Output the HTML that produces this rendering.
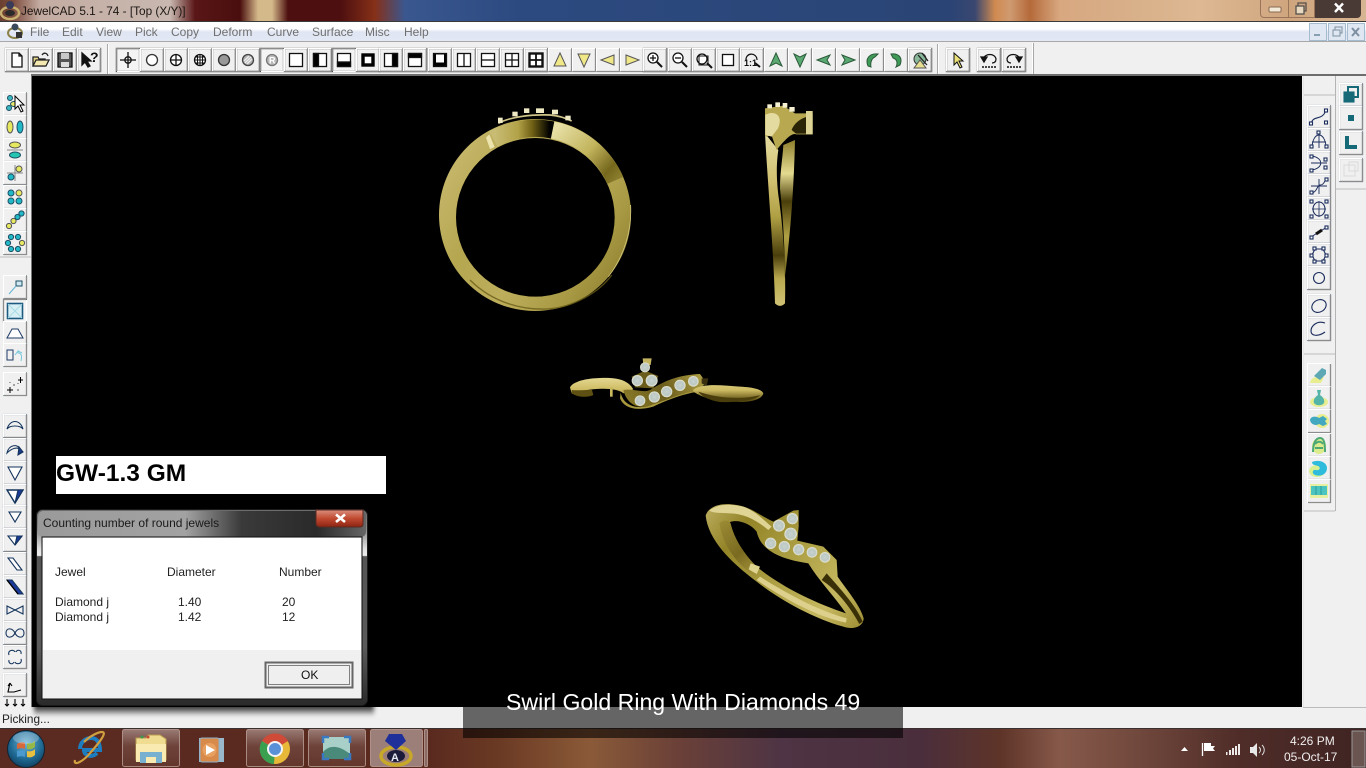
<!DOCTYPE html>
<html>
<head>
<meta charset="utf-8">
<title>JewelCAD</title>
<style>
html,body{margin:0;padding:0;width:1366px;height:768px;overflow:hidden;background:#f0f0f0;font-family:"Liberation Sans",sans-serif}
div,span{position:absolute}
.t{white-space:nowrap;font-size:12px;line-height:14px}
.m{top:25px;color:#6f6f6f;font-size:12px;line-height:14px;white-space:nowrap}
.d{color:#222;font-size:12px;line-height:14px;white-space:nowrap}
svg{position:absolute;left:0;top:0;filter:blur(.35px)}
</style>
</head>
<body>
<!-- title bar -->
<div style="left:0;top:0;width:1366px;height:21px;background:linear-gradient(90deg,#6a4030 0,#7c4a3a 12px,#c4aca2 40px,#c8b8b0 170px,#5a1616 195px,#4a0e0e 240px,#d4b98a 258px,#d4b98a 272px,#4d0f0f 288px,#4d0f0f 340px,#863018 375px,#3a5790 405px,#2c4a80 520px,#2a4475 950px,#3a4770 975px,#d08a50 995px,#cf9a70 1010px,#b56a3a 1030px,#d8a880 1060px,#d7ae88 1120px,#ddb892 1200px,#cfa57e 1290px,#d6b592 1366px)"></div>
<div style="left:1315px;top:0;width:46px;height:18px;background:#4a3a36;border-radius:0 0 4px 0"></div>
<div style="left:1260px;top:0;width:55px;height:18px;box-sizing:border-box;border:1px solid #9a7458;border-top:0;border-radius:0 0 0 4px"></div>
<div style="left:1288px;top:0;width:1px;height:18px;background:#9a7458"></div>
<div class="t" style="left:21px;top:4px;color:#1c1612;font-size:11.8px">JewelCAD 5.1 - 74 - [Top (X/Y)]</div>
<!-- menu -->
<div style="left:0;top:21px;width:1366px;height:21px;box-sizing:border-box;border-top:1px solid #3a3a3a;border-bottom:1px solid #a8a8a8;background:linear-gradient(#fff 0,#fdfeff 7px,#dfe5f2 10px,#e2e8f4 19px)"></div>
<span class="m" style="left:30px">File</span>
<span class="m" style="left:62px">Edit</span>
<span class="m" style="left:96px">View</span>
<span class="m" style="left:135px">Pick</span>
<span class="m" style="left:171px">Copy</span>
<span class="m" style="left:213px">Deform</span>
<span class="m" style="left:267px">Curve</span>
<span class="m" style="left:312px">Surface</span>
<span class="m" style="left:365px">Misc</span>
<span class="m" style="left:404px">Help</span>
<!-- canvas -->
<div style="left:31px;top:74px;width:1335px;height:2px;background:#6d6d6d"></div>
<div style="left:32px;top:76px;width:1270px;height:631px;background:#000"></div>
<!-- status / taskbar -->
<div style="left:0;top:707px;width:1366px;height:21px;background:#f0f0f0;overflow:hidden">
<div style="left:34px;top:-6px;width:340px;height:15px;background:linear-gradient(#333 40%,rgba(70,70,70,0));filter:blur(2px)"></div>
</div>
<div class="t" style="left:2px;top:712px;color:#222;font-size:11.8px">Picking...</div>
<div style="left:0;top:728px;width:1366px;height:40px;border-top:1px solid #3a3030;background:linear-gradient(90deg,#5b2a20 0,#5a2a1f 430px,#6b3a24 500px,#8a5a38 590px,#6a4038 680px,#4e3444 780px,#4a2e3c 920px,#5e3428 1000px,#86594a 1060px,#734a3e 1130px,#4f2c28 1240px,#3f2422 1366px);box-sizing:border-box;height:40px"></div>
<!-- svg layer -->
<svg width="1366" height="768" viewBox="0 0 1366 768">
<defs>
<g id="b"><rect x="-11.5" y="-11.5" width="23" height="23" fill="#f0f0f0"/><path d="M-11.5 11.5V-11.5H11.5" fill="none" stroke="#fff"/><path d="M-11 11.5H11.5V-11" fill="none" stroke="#8c8c8c" stroke-width="1.3"/></g>
<g id="p"><rect x="-11.5" y="-11.5" width="23" height="23" fill="#f4f4f4"/><path d="M-11.5 11.5V-11.5H11.5" fill="none" stroke="#8c8c8c" stroke-width="1.3"/><path d="M-11 11.5H11.5V-11" fill="none" stroke="#fff"/></g>
<linearGradient id="g1" gradientUnits="userSpaceOnUse" x1="30" y1="200" x2="600" y2="560">
<stop offset="0" stop-color="#c8b96e"/><stop offset=".3" stop-color="#b5a650"/><stop offset=".55" stop-color="#bdae5c"/><stop offset=".8" stop-color="#a89a44"/><stop offset="1" stop-color="#8a7c2c"/></linearGradient>
<linearGradient id="g2" gradientUnits="userSpaceOnUse" x1="380" y1="100" x2="556" y2="256">
<stop offset="0" stop-color="#e6deA4"/><stop offset=".5" stop-color="#c2b45c"/><stop offset=".85" stop-color="#75671c"/><stop offset="1" stop-color="#8a7c2c"/></linearGradient>
<linearGradient id="g3" gradientUnits="userSpaceOnUse" x1="195" y1="0" x2="368" y2="0">
<stop offset="0" stop-color="#c8bc74"/><stop offset=".4" stop-color="#b2a248"/><stop offset=".65" stop-color="#6e5f14"/><stop offset=".95" stop-color="#000"/></linearGradient>
<linearGradient id="v1" gradientUnits="userSpaceOnUse" x1="0" y1="100" x2="0" y2="630">
<stop offset="0" stop-color="#e8e0a8"/><stop offset=".3" stop-color="#d0c070"/><stop offset=".5" stop-color="#b0a044"/><stop offset=".72" stop-color="#4a3e0c"/><stop offset=".85" stop-color="#b8a84e"/><stop offset="1" stop-color="#d0c274"/></linearGradient>
<linearGradient id="v2" gradientUnits="userSpaceOnUse" x1="0" y1="130" x2="0" y2="550">
<stop offset="0" stop-color="#8a7a28"/><stop offset=".25" stop-color="#e4da90"/><stop offset=".45" stop-color="#4a3e0a"/><stop offset=".7" stop-color="#b0a044"/><stop offset="1" stop-color="#6a5c18"/></linearGradient>
<linearGradient id="h1" gradientUnits="userSpaceOnUse" x1="0" y1="80" x2="0" y2="170">
<stop offset="0" stop-color="#e6da96"/><stop offset=".45" stop-color="#cdbb62"/><stop offset=".8" stop-color="#5a4c10"/><stop offset="1" stop-color="#8a7a2a"/></linearGradient>
<linearGradient id="h2" gradientUnits="userSpaceOnUse" x1="200" y1="170" x2="420" y2="70">
<stop offset="0" stop-color="#8a7a2a"/><stop offset=".5" stop-color="#6a5c1a"/><stop offset="1" stop-color="#ac9c44"/></linearGradient>
<linearGradient id="r4" gradientUnits="userSpaceOnUse" x1="440" y1="480" x2="900" y2="830">
<stop offset="0" stop-color="#b8aa5a"/><stop offset=".2" stop-color="#938428"/><stop offset=".45" stop-color="#a89a3e"/><stop offset=".8" stop-color="#c6b860"/><stop offset="1" stop-color="#a09038"/></linearGradient>
<linearGradient id="r4i" gradientUnits="userSpaceOnUse" x1="480" y1="520" x2="590" y2="660">
<stop offset="0" stop-color="#9a8a34"/><stop offset=".6" stop-color="#7a6a20"/><stop offset="1" stop-color="#a09038"/></linearGradient>
<radialGradient id="dm"><stop offset="0" stop-color="#c8d2ce"/><stop offset=".65" stop-color="#bcc8c4"/><stop offset="1" stop-color="#e6e6d4"/></radialGradient>
<linearGradient id="frame" x1="0" y1="0" x2="0" y2="1"><stop offset="0" stop-color="#6a6a6a"/><stop offset=".1" stop-color="#888"/><stop offset=".2" stop-color="#e0e0e0"/><stop offset=".235" stop-color="#eee"/><stop offset=".24" stop-color="#555"/><stop offset=".7" stop-color="#5a5a5a"/><stop offset="1" stop-color="#2a2a2a"/></linearGradient>
<linearGradient id="ttl" x1="0" y1="0" x2="1" y2="0"><stop offset="0" stop-color="#9a9a9a"/><stop offset=".45" stop-color="#a2a2a2"/><stop offset=".62" stop-color="#3a3a3a"/><stop offset=".85" stop-color="#2a2a2a"/><stop offset="1" stop-color="#666"/></linearGradient>
<linearGradient id="red" x1="0" y1="0" x2="0" y2="1"><stop offset="0" stop-color="#d98f7e"/><stop offset=".5" stop-color="#c04a30"/><stop offset="1" stop-color="#8c2412"/></linearGradient>
<radialGradient id="orb" cx=".5" cy=".35" r=".7"><stop offset="0" stop-color="#6fb4d8"/><stop offset=".6" stop-color="#1f6a94"/><stop offset="1" stop-color="#0f3a58"/></radialGradient>
<linearGradient id="tb" x1="0" y1="0" x2="0" y2="1"><stop offset="0" stop-color="#fff" stop-opacity=".38"/><stop offset=".45" stop-color="#fff" stop-opacity=".12"/><stop offset="1" stop-color="#fff" stop-opacity=".06"/></linearGradient>
</defs>

<!-- toolbar separators -->
<g stroke-width="1">
<path d="M108.5 44V74M938.5 44V74M1032.5 43V74" stroke="#fff"/>
<path d="M107.5 44V74M937.5 44V74M1033.5 43V74" stroke="#a8a8a8"/>
<path d="M31.5 76V707" stroke="#777"/>
<path d="M1303 95H1335M1303 354H1335M1303 511H1335M1336 189H1366M0 257H31" stroke="#bbb"/>
<path d="M1335.5 76V511" stroke="#b4b4b4"/>
<path d="M1303.5 76V707" stroke="#e6e6e6"/>
<path d="M1303 707.5H1366" stroke="#bbb"/>
</g>

<!-- top toolbar -->
<g fill="none" stroke="#111" stroke-width="1.3">
<g transform="translate(17 60)"><use href="#b"/><path d="M-5-7H2L5-4V7H-5ZM2-7V-4H5" fill="#fff"/></g>
<g transform="translate(41 60)"><use href="#b"/><path d="M-8 6V-3H-3L-2-1H4V6Z" fill="#e8d88a" stroke="#222"/><path d="M-8 6L-5 0H8L5 6Z" fill="#f2e8b0" stroke="#222"/><path d="M1-5C3-8 6-7 7-4" stroke="#222"/></g>
<g transform="translate(65 60)"><use href="#b"/><rect x="-7" y="-7" width="14" height="14" fill="#555"/><rect x="-4" y="-7" width="8" height="6" fill="#c8c8c8" stroke="none"/><rect x="-4" y="2" width="8" height="5" fill="#ddd" stroke="none"/></g>
<g transform="translate(89 60)"><use href="#b"/><path d="M-7-7L-7 5-4 2-1 7 1 6-2 1 2 1Z" fill="#111"/><text x="1" y="2" font-family="Liberation Sans,sans-serif" font-weight="700" font-size="14" fill="#111" stroke="none">?</text></g>

<g transform="translate(128 60)"><use href="#p"/><circle r="3.2" fill="#fff"/><path d="M0-8V8M-8 0H8"/></g>
<g transform="translate(152 60)"><use href="#b"/><circle r="5.5" fill="#fff" stroke="#333"/></g>
<g transform="translate(176 60)"><use href="#b"/><circle r="5.5" fill="#fff"/><path d="M0-6V6M-6 0H6"/></g>
<g transform="translate(200 60)"><use href="#b"/><circle r="5.5" fill="#fff"/><path d="M0-6V6M-6 0H6M-5-3H5M-5 3H5M-2.5-5V5M2.5-5V5" stroke-width="1"/></g>
<g transform="translate(224 60)"><use href="#b"/><circle r="5.5" fill="#999" stroke="#333"/></g>
<g transform="translate(248 60)"><use href="#b"/><circle r="5.5" fill="#b0b0b0" stroke="#444"/><path d="M-3 3L3-3M-1 4L4-1M-4 1L1-4" stroke="#eee" stroke-width="1.4"/></g>
<g transform="translate(272 60)"><use href="#p"/><circle r="5.5" fill="#bbb" stroke="#777"/><text x="-3" y="3.5" font-family="Liberation Sans,sans-serif" font-weight="700" font-size="9" fill="#fff" stroke="none">R</text></g>

<g transform="translate(296 60)"><use href="#b"/><rect x="-6.5" y="-6.5" width="13" height="13" fill="#fff"/></g>
<g transform="translate(320 60)"><use href="#b"/><rect x="-6.5" y="-6.5" width="13" height="13" fill="#fff"/><rect x="-6.5" y="-6.5" width="5" height="13" fill="#000"/></g>
<g transform="translate(344 60)"><use href="#p"/><rect x="-6.5" y="-6.5" width="13" height="13" fill="#fff"/><rect x="-6.5" y="2" width="13" height="4.5" fill="#000"/></g>
<g transform="translate(368 60)"><use href="#b"/><rect x="-5" y="-5" width="10" height="10" fill="#fff" stroke="#000" stroke-width="3.4"/></g>
<g transform="translate(391 60)"><use href="#b"/><rect x="-6.5" y="-6.5" width="13" height="13" fill="#fff"/><rect x="1.5" y="-6.5" width="5" height="13" fill="#000"/></g>
<g transform="translate(415 60)"><use href="#b"/><rect x="-6.5" y="-6.5" width="13" height="13" fill="#fff"/><rect x="-6.5" y="-6.5" width="13" height="4" fill="#000"/></g>
<g transform="translate(440 60)"><use href="#b"/><rect x="-6.5" y="-6.5" width="13" height="13" fill="#000"/><rect x="-4" y="-5.5" width="8" height="8" fill="#fff" stroke="none"/></g>
<g transform="translate(464 60)"><use href="#b"/><rect x="-6.5" y="-6.5" width="13" height="13" fill="#fff"/><path d="M0-6.5V6.5"/></g>
<g transform="translate(488 60)"><use href="#b"/><rect x="-6.5" y="-6.5" width="13" height="13" fill="#fff"/><path d="M-6.5 0H6.5"/></g>
<g transform="translate(512 60)"><use href="#b"/><rect x="-6.5" y="-6.5" width="13" height="13" fill="#fff"/><path d="M-6.5 0H6.5M0-6.5V6.5"/></g>
<g transform="translate(536 60)"><use href="#b"/><rect x="-6.5" y="-6.5" width="13" height="13" fill="#fff" stroke-width="2.4"/><path d="M-6.5 0H6.5M0-6.5V6.5" stroke-width="1.8"/></g>

<g stroke="#555" stroke-width="1" fill="#efe788">
<g transform="translate(560 60)"><use href="#b"/><path d="M0-7L6 6H-6Z"/></g>
<g transform="translate(584 60)"><use href="#b"/><path d="M0 7L6-6H-6Z"/></g>
<g transform="translate(608 60)"><use href="#b"/><path d="M-7 0L6-5V5Z"/></g>
<g transform="translate(632 60)"><use href="#b"/><path d="M7 0L-6-5V5Z"/></g>
</g>
<g transform="translate(655 60)"><use href="#b"/><circle cx="-2" cy="-2" r="5" fill="#fff"/><path d="M-5-2H1M-2-5V1M2 2L7 7"/><path d="M2 2L7 7" stroke-width="2"/></g>
<g transform="translate(680 60)"><use href="#b"/><circle cx="-2" cy="-2" r="5" fill="#fff"/><path d="M-5-2H1"/><path d="M2 2L7 7" stroke-width="2"/></g>
<g transform="translate(704 60)"><use href="#b"/><circle cx="-2" cy="-1" r="5" fill="#fff"/><rect x="-5" y="-4" width="9" height="9" stroke-width="1"/><path d="M3 3L8 8" stroke-width="2"/></g>
<g transform="translate(728 60)"><use href="#b"/><rect x="-5.5" y="-5.5" width="11" height="11" fill="#fff"/></g>
<g transform="translate(752 60)"><use href="#b"/><path d="M-6 1C-7-8 5-8 5 0" stroke-width="1.2"/><text x="-8" y="6" font-family="Liberation Sans,sans-serif" font-weight="700" font-size="9" fill="#111" stroke="none">1:1</text><path d="M3 3L8 7" stroke-width="2"/></g>
<g stroke="#2b5a3a" stroke-width="1" fill="#5aa872">
<g transform="translate(776 60)"><use href="#b"/><path d="M0-7L6 6 0 3-6 6Z"/></g>
<g transform="translate(800 60)"><use href="#b"/><path d="M0 7L6-6 0-3-6-6Z"/></g>
<g transform="translate(824 60)"><use href="#b"/><path d="M-7 0L6-5 3 0 6 5Z"/></g>
<g transform="translate(848 60)"><use href="#b"/><path d="M7 0L-6-5-3 0-6 5Z"/></g>
<g transform="translate(872 60)"><use href="#b"/><path d="M6-6C-3-7-7-1-4 6L-1 7C-2 2 0-2 3-3Z" fill="#3f9a58"/></g>
<g transform="translate(896 60)"><use href="#b"/><path d="M-5-6C3-7 7-2 4 5L0 7C2 3 1-1-3-2Z" fill="#3f9a58"/></g>
</g>
<g transform="translate(920 60)"><use href="#b"/><circle cy="-1" r="6" fill="#8ab89a" stroke="#333" stroke-width="1"/><path d="M-6 8L0 0 6 8Z" fill="#e8e090" stroke="#555" stroke-width="1"/><path d="M-2-5L7 5M2-7L8 1" stroke="#222" stroke-width="1.3"/></g>
<g transform="translate(958 60)"><use href="#b"/><path d="M-4-7V5L-1 2 2 8 4 7 1 1H5Z" fill="#ece27a" stroke-width="1"/></g>
<g transform="translate(989 60)"><use href="#b"/><path d="M-6-1C-4-7 6-7 7-1C7 2 5 3 3 3" stroke-width="1.2"/><path d="M-8-3L-5 2-2-3Z" fill="#111"/><path d="M-7 7H7" stroke-width="1.4" stroke-dasharray="2 1"/></g>
<g transform="translate(1014 60)"><use href="#b"/><path d="M6-1C4-7-6-7-7-1C-7 2-5 3-3 3" stroke-width="1.2"/><path d="M8-3L5 2 2-3Z" fill="#111"/><path d="M-7 7H7" stroke-width="1.4" stroke-dasharray="2 1"/></g>
</g>

<!-- MDI buttons -->
<g fill="#dfe7f2" stroke="#a5bccf">
<rect x="1309.5" y="23.5" width="17" height="17"/><rect x="1328.5" y="23.5" width="17" height="17"/><rect x="1347.5" y="23.5" width="17" height="17"/>
<path d="M1314 35H1320" stroke="#88a0b4" stroke-width="2"/>
<path d="M1333 30H1340V36H1333ZM1335 30V27H1342V33H1340" fill="none" stroke="#7d8fa0"/>
<path d="M1352 28L1359 36M1359 28L1352 36" stroke="#7d8fa0" stroke-width="2"/>
</g>
<!-- window buttons -->
<rect x="1269" y="7" width="12" height="5" rx="1" fill="#f3ead8" stroke="#8a6a50"/>
<g fill="none" stroke="#56504c" stroke-width="1.3"><rect x="1296" y="6" width="8" height="8" fill="#e8d8c0"/><path d="M1298 6V3H1306V11H1304"/></g>
<path d="M1335 3.5L1343 12M1343 3.5L1335 12" stroke="#fff" stroke-width="2.4"/>
<!-- app icons -->
<g transform="translate(10 11)"><ellipse cy="2" rx="9" ry="6" fill="none" stroke="#c8b070" stroke-width="2.4"/><ellipse cy="2" rx="5" ry="3" fill="#2a2a2a"/><circle cy="-6" r="4" fill="#3a3a5a"/></g>
<g transform="translate(15 31)"><ellipse cy="2" rx="7" ry="5" fill="none" stroke="#8a8048" stroke-width="2"/><circle cy="-4" r="3.5" fill="#3a4a5a"/><rect x="1" y="1" width="6" height="6" fill="#333"/></g>

<!-- left toolbar -->
<g fill="none" stroke="#1c4f66" stroke-width="1">
<g transform="translate(15 104)"><use href="#b"/><circle cx="-5" cy="-6" r="2.5" fill="#3bb7c0"/><ellipse cx="-1" cy="0" rx="3.5" ry="2.5" fill="#e8e86a"/><circle cx="-6" cy="4" r="2.5" fill="#3bb7c0"/><path d="M0-8V5L3 2 6 8 8 7 5 1H9Z" fill="#fff" stroke="#000"/></g>
<g transform="translate(15 127)"><use href="#b"/><ellipse cx="-5" rx="3" ry="6" fill="#e6e860" stroke="#555"/><ellipse cx="5" rx="3" ry="6" fill="#22b9c6"/></g>
<g transform="translate(15 150)"><use href="#b"/><ellipse cy="-5" rx="5.5" ry="3" fill="#e6e860" stroke="#555"/><path d="M-8 0H8" stroke="#888"/><ellipse cy="5" rx="5.5" ry="3" fill="#22c6b0"/></g>
<g transform="translate(15 173)"><use href="#b"/><circle cx="4" cy="-4" r="3" fill="#e6e860" stroke="#555"/><circle cx="-4" cy="4" r="3" fill="#22b9c6"/><path d="M-8 0H8M0-8V8" stroke="#888"/></g>
<g transform="translate(15 197)"><use href="#b"/><circle cx="-4" cy="-4" r="3" fill="#22b9c6"/><circle cx="4" cy="-4" r="3" fill="#e6e860" stroke="#555"/><circle cx="-4" cy="4" r="3" fill="#22b9c6"/><circle cx="4" cy="4" r="3" fill="#22b9c6"/></g>
<g transform="translate(15 220)"><use href="#b"/><circle cx="-6" cy="6" r="2.6" fill="#e6e860" stroke="#555"/><circle cx="-1.5" cy="1" r="2.6" fill="#e6e860" stroke="#555"/><circle cx="2.5" cy="-3" r="2.6" fill="#22b9c6"/><circle cx="6.5" cy="-6.5" r="2.6" fill="#22b9c6"/></g>
<g transform="translate(15 243)"><use href="#b"/><circle cx="-4" cy="-6" r="2.6" fill="#22b9c6"/><circle cx="3" cy="-6" r="2.6" fill="#22b9c6"/><circle cx="7" cy="0" r="2.6" fill="#e6e860" stroke="#555"/><circle cx="3" cy="6" r="2.6" fill="#22b9c6"/><circle cx="-4" cy="6" r="2.6" fill="#22b9c6"/><circle cx="-7" cy="0" r="2.6" fill="#22b9c6"/></g>

<g transform="translate(15 287)"><use href="#b"/><rect x="1" y="-6" width="6" height="5" fill="#cfe8f2"/><path d="M-6 7L1-1" stroke="#63b4d6"/></g>
<g transform="translate(15 311)"><use href="#p"/><rect x="-7.5" y="-7.5" width="15" height="15" fill="#d8f0f4" stroke="#1c5a80" stroke-width="1.6"/><path d="M-7-7L7 7M7-7L-7 7" stroke="#a8dce8"/></g>
<g transform="translate(15 333)"><use href="#b"/><path d="M-8 5H8L3-4H-3Z" stroke="#1c3a66" fill="#fff"/></g>
<g transform="translate(15 355)"><use href="#b"/><rect x="-8" y="-5" width="6" height="10" stroke="#1c3a66"/><path d="M0 0L3-4V-2C7-2 7 2 6 6M3-4L7-2" stroke="#7cc8dc"/></g>
<g transform="translate(15 384)"><use href="#b"/><path d="M-8 6H-2M-5 3V9M3-4H8M5.5-7V-1" stroke="#000"/><path d="M-2 1H0M3-1V0M-5-2V-1M2 6H4" stroke="#555"/></g>

<g stroke="#14345c" stroke-width="1.1">
<g transform="translate(15 426)"><use href="#b"/><path d="M-8 3C-5-7 5-7 8 3C5-1-5-1-8 3Z"/></g>
<g transform="translate(15 450)"><use href="#b"/><path d="M-8 3C-6-6 3-6 5-1C2-3-3-2-8 3Z"/><path d="M4-3L8 2 3 5Z" fill="#1c3a8a"/></g>
<g transform="translate(15 473)"><use href="#b"/><path d="M-7-6H7L0 7Z" fill="#fff"/></g>
<g transform="translate(15 496)"><use href="#b"/><path d="M-8-6H8L0 7Z" fill="#fff" stroke-width="1.4"/><path d="M3-6H8L0 7Z" fill="#1c3a9a"/></g>
<g transform="translate(15 517)"><use href="#b"/><path d="M-6-5H6L0 5Z" fill="#fff"/></g>
<g transform="translate(15 540)"><use href="#b"/><path d="M-7-4H7L0 5Z" fill="#fff"/><path d="M2-4H7L0 5Z" fill="#1c3a9a"/></g>
<g transform="translate(15 564)"><use href="#b"/><path d="M-7-6H-2L7 6H2Z" fill="#fff"/></g>
<g transform="translate(15 587)"><use href="#b"/><path d="M-8-7H-3L8 7H3Z" fill="#1c3a9a"/><path d="M-8-7L3 7" stroke="#000" stroke-width="1.4"/></g>
<g transform="translate(15 610)"><use href="#b"/><path d="M-8-4L8 4V-4L-8 4Z"/></g>
<g transform="translate(15 633)"><use href="#b"/><path d="M0 0C-3-6-9-5-9 0C-9 5-3 6 0 0C3-6 9-5 9 0C9 5 3 6 0 0Z"/></g>
<g transform="translate(15 657)"><use href="#b"/><path d="M-6-2C-8-7-1-8 0-5M6 2C8 7 1 8 0 5M6-3C7-7 2-8 1-5M-6 3C-7 7-2 8-1 5" /></g>
<g transform="translate(15 685)"><use href="#b"/><path d="M-5-2L-7 7H-1L6 5M-5-2L-7 1M-5-2L-3 1" stroke="#000"/></g>
<g transform="translate(15 703)"><rect x="-11" y="-5" width="22" height="9" fill="#f0f0f0" stroke="none"/><path d="M-8-4V3M-10 1L-8 3-6 1M0-4V3M-2 1L0 3 2 1M8-4V3M6 1L8 3 10 1" stroke="#000"/></g>
</g>
</g>

<!-- right toolbar -->
<g fill="none" stroke="#1a2c5c" stroke-width="1.1">
<g transform="translate(1351 95)"><use href="#b"/><rect x="-3" y="-8" width="10" height="10" stroke="#166a78" stroke-width="2"/><rect x="-7" y="-3" width="10" height="10" fill="#166a78" stroke="#166a78"/></g>
<g transform="translate(1351 118)"><use href="#b"/><rect x="-3" y="-3" width="6" height="6" fill="#166a78" stroke="none"/></g>
<g transform="translate(1351 143)"><use href="#b"/><path d="M-6-7H-2V2H6V6H-6Z" fill="#166a78" stroke="none"/></g>
<g transform="translate(1351 170)"><use href="#b"/><g stroke="#dcdcdc"><rect x="-7" y="-5" width="11" height="11"/><rect x="-2" y="-8" width="9" height="9"/></g></g>

<g transform="translate(1319 117)"><use href="#b"/><path d="M-8 7C-6-3 3 5 7-7"/><g fill="#fff"><rect x="-9.5" y="5" width="3" height="3"/><rect x="5.5" y="-8" width="3" height="3"/><rect x="5.5" y="4" width="3" height="3"/></g></g>
<g transform="translate(1319 140)"><use href="#b"/><path d="M-7 7C-6-9 6-9 7 7M0-8V8M-7 2H7" stroke-width=".9"/><g fill="#fff"><rect x="-9" y="5" width="3" height="3"/><rect x="6" y="5" width="3" height="3"/><rect x="-2" y="-9" width="3" height="3"/></g></g>
<g transform="translate(1319 163)"><use href="#b"/><path d="M-8-7C5-6 5 6-8 7M-8 0H8" stroke-width=".9"/><g fill="#fff"><rect x="-9" y="-8" width="3" height="3"/><rect x="-9" y="6" width="3" height="3"/><rect x="5" y="-5" width="3" height="3"/><rect x="5" y="3" width="3" height="3"/></g></g>
<g transform="translate(1319 186)"><use href="#b"/><path d="M-8 7C-2 7-2-1 1-1C4-1 5-3 7-7M-8 0H8M0-7V8" stroke-width=".9"/><g fill="#fff"><rect x="-9" y="5" width="3" height="3"/><rect x="6" y="-8" width="3" height="3"/></g></g>
<g transform="translate(1319 209)"><use href="#b"/><ellipse rx="6" ry="7"/><path d="M-7 0H7M0-8V8" stroke-width=".8"/><g fill="#fff"><rect x="-9" y="-9" width="3" height="3"/><rect x="6" y="-9" width="3" height="3"/><rect x="-9" y="6" width="3" height="3"/><rect x="6" y="6" width="3" height="3"/></g></g>
<g transform="translate(1319 232)"><use href="#b"/><path d="M-8 5L8-5" stroke-width="1"/><path d="M-3 2L3-2" stroke-width="3" stroke="#111"/><g fill="#fff"><rect x="-9" y="4" width="3" height="3"/><rect x="6" y="-6" width="3" height="3"/></g></g>
<g transform="translate(1319 255)"><use href="#b"/><path d="M-4-6H4L7 0 4 6H-4L-7 0Z"/><g fill="#fff"><rect x="-6" y="-8" width="3" height="3"/><rect x="3" y="-8" width="3" height="3"/><rect x="-9" y="-1" width="3" height="3"/><rect x="6" y="-1" width="3" height="3"/><rect x="-6" y="5" width="3" height="3"/><rect x="3" y="5" width="3" height="3"/></g></g>
<g transform="translate(1319 278)"><use href="#b"/><circle r="5.5"/></g>
<g transform="translate(1319 306)"><use href="#b"/><ellipse rx="7.5" ry="6" transform="rotate(-30)"/></g>
<g transform="translate(1319 329)"><use href="#b"/><path d="M6-6C-2-9-8-3-8 2C-8 7-1 8 6 3"/></g>
</g>
<g>
<g transform="translate(1319 375)"><use href="#b"/><path d="M-9 8C-8 3-4 1 0 3L5 2 2 8Z" fill="#e8ee90"/><path d="M-5 1L3-7 7-5 7-1 1 5Z" fill="#5da8b4"/></g>
<g transform="translate(1319 398)"><use href="#b"/><ellipse cy="4" rx="9" ry="5" fill="#e8ee90"/><path d="M-2-8H2L1-3C4-1 6 2 5 5C3 8-3 8-5 5C-6 2-4-1-1-3Z" fill="#55b4a8"/></g>
<g transform="translate(1319 421)"><use href="#b"/><ellipse cx="3" rx="7" ry="7" fill="#e8ee90"/><path d="M-9-1C-8-5-3-5 0-3L4-5 8-2 6 0 8 3 4 5 0 3C-3 5-8 4-9-1Z" fill="#42a8c0"/></g>
<g transform="translate(1319 445)"><use href="#b"/><ellipse cy="1" rx="7" ry="8" fill="#dcec8c"/><path d="M-6 7C-6-2-3-7 1-7C5-7 6-2 6 7M-4-1C-1-4 2-4 4-1M-4 3H4" fill="none" stroke="#4ca874" stroke-width="2"/></g>
<g transform="translate(1319 468)"><use href="#b"/><ellipse cx="-2" cy="3" rx="8" ry="6" fill="#d8f090"/><path d="M-7-6C0-9 8-6 8 0C8 6 2 9-4 7C-8 5-6 1-3 2C1 3 2-1-1-2C-4-3-7-3-7-6Z" fill="#2fbcdc"/></g>
<g transform="translate(1319 491)"><use href="#b"/><rect x="-9" y="-7" width="18" height="14" fill="#e6f0a0"/><rect x="-8" y="-5" width="16" height="9" fill="#4cc4c0"/><path d="M-3-5V4M2-5V4" stroke="#2a9c9c"/></g>
</g>

<!-- ring 1 and 2 -->
<g transform="translate(430 95) scale(.33333)">
<path fill-rule="evenodd" d="M27 360A288 288 0 1 1 603 360A288 288 0 1 1 27 360ZM78 367A238 238 0 1 0 554 367A238 238 0 1 0 78 367Z" fill="url(#g1)"/>
<path d="M190 132A263 263 0 0 1 368 105" fill="none" stroke="url(#g3)" stroke-width="52"/>
<path d="M368 105A263 263 0 0 1 556 256" fill="none" stroke="url(#g2)" stroke-width="52"/>
<path d="M178 118L194 156 180 162 168 128Z" fill="#ece4ac"/>
<path d="M602 330C606 400 585 480 535 545" fill="none" stroke="#ddd088" stroke-width="2"/>
<path d="M120 555C190 625 280 645 350 642C430 638 510 590 545 540" fill="none" stroke="#6a5c16" stroke-width="4" opacity=".8"/>
<path d="M205 85C240 66 300 58 360 60C385 62 405 68 425 78" fill="none" stroke="#cfc488" stroke-width="5"/>
<g fill="#efe9c4"><rect x="204" y="68" width="14" height="16"/><rect x="247" y="50" width="16" height="14"/><rect x="282" y="40" width="16" height="14"/><rect x="318" y="40" width="24" height="14"/><rect x="366" y="44" width="18" height="14"/><rect x="406" y="62" width="16" height="14"/></g>

<path d="M1005 115C1012 250 1030 450 1035 625Q1050 640 1065 625C1068 520 1060 400 1045 300C1038 240 1040 200 1045 165Z" fill="url(#v1)"/>
<path d="M1060 150L1095 135C1092 280 1080 430 1064 550C1066 440 1055 330 1050 280C1050 230 1058 190 1060 150Z" fill="url(#v2)"/>
<path d="M1005 40L1060 32 1095 55 1148 55V118H1098C1085 112 1060 140 1040 165L1025 122 1005 125Z" fill="#b8a850"/>
<path d="M1006 60C1030 45 1062 58 1044 100L1025 125 1006 120Z" fill="#e4dba0"/>
<path d="M1128 48H1148V118H1128Z" fill="#dcd394"/>
<path d="M1085 105C1092 85 1110 72 1128 66V116H1098Z" fill="#2a2406"/>
<g fill="#f4f0d0"><rect x="1012" y="28" width="14" height="12"/><rect x="1036" y="22" width="14" height="14"/><rect x="1058" y="24" width="14" height="14"/><rect x="1078" y="36" width="16" height="14"/></g>
</g>

<!-- ring 3 and 4 -->
<g transform="translate(560 350) scale(.33333)">
<path d="M30 112C40 92 90 82 150 84C190 86 210 100 220 118L190 130C175 115 120 112 70 122C50 128 40 135 35 130Z" fill="url(#h1)"/>
<path d="M35 130C60 146 90 140 100 135L96 120C70 120 50 122 35 120Z" fill="#5e5012"/>
<path d="M150 112H158V140H150Z" fill="#c8b860"/>
<path d="M182 128C190 165 225 178 265 168C310 150 345 125 385 112L420 125C380 128 320 150 280 170C240 182 195 180 180 145Z" fill="#a8983e"/>
<path d="M190 120C220 115 250 130 270 120C310 95 350 75 420 72L440 100 400 125C360 130 310 155 265 168C230 178 200 160 190 120Z" fill="url(#h2)"/>
<path d="M400 118C430 100 480 105 540 110C580 112 605 118 610 130C605 150 570 158 520 155C470 155 430 145 400 125Z" fill="url(#h1)"/>
<path d="M415 125C470 145 550 150 600 135C590 152 520 158 480 156C450 152 425 140 415 125Z" fill="#4a3e0c"/>
<path d="M425 85L445 85 440 108 425 100Z" fill="#3a3010"/>
<path d="M248 25H275L272 45H250Z" fill="#c4b35f"/>
<path d="M215 80L255 62 295 78 280 115 225 112Z" fill="#6a5c1a"/>
<g fill="url(#dm)"><circle cx="255" cy="52" r="15"/><circle cx="232" cy="92" r="17"/><circle cx="275" cy="92" r="18"/><circle cx="240" cy="152" r="16"/><circle cx="283" cy="141" r="17"/><circle cx="320" cy="125" r="17"/><circle cx="360" cy="106" r="17"/><circle cx="400" cy="94" r="16"/></g>

<!-- ring 4 silhouette -->
<path d="M437 497C445 470 480 456 530 465C575 472 605 500 640 515L700 482 716 480 716 530 712 572 790 590 830 630 833 680C860 720 900 765 911 805C910 830 880 840 850 830C760 805 660 750 590 695C510 635 445 570 437 497Z" fill="url(#r4)"/>
<path d="M510 516C535 508 570 520 590 545C600 590 640 625 745 640C775 690 820 735 858 790C770 760 670 715 590 650C550 610 520 565 510 516Z" fill="#000"/>
<path d="M478 520C490 508 505 510 512 520C522 565 552 612 592 652L585 680C530 640 490 590 478 520Z" fill="url(#r4i)"/>
<path d="M572 640L600 650 590 672 566 658Z" fill="#e0d590"/>
<path d="M600 680C680 730 770 780 860 805L858 818C770 800 670 745 590 690Z" fill="#dcd08c"/>
<path d="M448 482C470 462 510 460 550 470C590 485 610 510 635 530L625 540C590 510 550 490 510 490C480 488 460 490 448 482Z" fill="#dfd494"/>
<path d="M800 670C840 715 890 770 908 815L898 822C870 770 830 720 785 690Z" fill="#3a3008"/>
<g fill="url(#dm)"><circle cx="657" cy="527" r="18"/><circle cx="697" cy="506" r="17"/><circle cx="692" cy="552" r="19"/><circle cx="632" cy="580" r="17"/><circle cx="673" cy="590" r="17"/><circle cx="716" cy="599" r="17"/><circle cx="756" cy="607" r="16"/><circle cx="795" cy="622" r="16"/></g>
</g>

<!-- dialog -->
<rect x="36.500" y="509.500" width="331" height="196" rx="6" fill="url(#frame)" stroke="#1a1a1a"/>
<rect x="38" y="511" width="328" height="26" rx="5" fill="url(#ttl)"/>
<rect x="42" y="537" width="320" height="162" fill="#f0f0f0" stroke="#111"/>
<rect x="43" y="538" width="318" height="112" fill="#fff"/>
<path d="M316 510H363V524Q363 527 360 527H320Q316 527 316 523Z" fill="url(#red)" stroke="#5a2a22"/>
<path d="M336 514.5L345 522M345 514.5L336 522" stroke="#fff" stroke-width="2.6"/>
<rect x="265.500" y="662.500" width="87" height="25" fill="#efefef" stroke="#666" stroke-width="2"/>
<rect x="268.500" y="665.500" width="81" height="19" fill="none" stroke="#111" stroke-dasharray="1 1"/>

<!-- taskbar -->
<path d="M1352 731H1365V767H1352Z" fill="#6a5550" stroke="#999"/>
<g stroke="#c0a8a0" stroke-opacity=".75">
<rect x="122.500" y="729.500" width="57" height="37" rx="2" fill="url(#tb)"/>
<rect x="246.500" y="729.500" width="57" height="37" rx="2" fill="url(#tb)"/>
<rect x="308.500" y="729.500" width="57" height="37" rx="2" fill="url(#tb)"/>
<rect x="370.500" y="729.500" width="52" height="37" rx="2" fill="#fff" fill-opacity=".4"/>
<rect x="424.500" y="729.500" width="3" height="37" rx="1" fill="#fff" fill-opacity=".3"/>
</g>
<!-- start orb -->
<circle cx="26" cy="749" r="18.500" fill="url(#orb)" stroke="#123" stroke-width="1"/>
<path d="M17 744C20 742 23 742 25 743V749C23 748 20 748 17 749Z" fill="#d8683a"/><path d="M27 743C30 744 33 743 35 741V747C33 749 30 750 27 749Z" fill="#96b848"/><path d="M17 751C20 750 23 750 25 751V757C23 756 20 756 17 757Z" fill="#4a9ad0"/><path d="M27 751C30 752 33 751 35 749V755C33 757 30 758 27 757Z" fill="#e8c040"/>
<ellipse cx="26" cy="738" rx="13" ry="6" fill="#fff" opacity=".25"/>
<!-- IE -->
<path d="M80 749C80 742 86 738 91 738C97 738 100 743 100 750H84C84 756 92 758 97 753" fill="none" stroke="#1c7ec0" stroke-width="4"/><path d="M75 760C73 767 84 761 91 752C98 744 108 732 102 732C98 732 90 736 84 742" fill="none" stroke="#d0a040" stroke-width="2.200"/>
<!-- folder -->
<path d="M136 738H146L148 735H160L166 739V760H136Z" fill="#f0dc90" stroke="#b89c50"/><path d="M136 744H166V762H136Z" fill="#f8eab0"/><rect x="140" y="752" width="22" height="11" fill="#78b0d0"/><rect x="146" y="757" width="10" height="6" fill="#f8eab0"/><circle cx="142" cy="737" r="1.500" fill="#3a9a4a"/><circle cx="148" cy="737" r="1.500" fill="#c84a30"/>
<!-- media -->
<rect x="199" y="738" width="25" height="24" fill="#9ab8cc"/><rect x="200" y="738" width="19" height="24" rx="2" fill="#d88a4a" stroke="#8ab0c8"/><circle cx="209.500" cy="750" r="7" fill="#e8a060"/><path d="M206 745L215 750 206 755Z" fill="#fff"/>
<!-- chrome -->
<circle cx="275" cy="749" r="15" fill="#e8b838"/><path d="M275 749L262 741A15 15 0 0 1 288 741Z" fill="#d04a38"/><path d="M275 749L262 741A15 15 0 0 0 274 764Z" fill="#3aa050"/><circle cx="275" cy="749" r="7" fill="#5a90d8" stroke="#f4f4f4" stroke-width="2"/>
<!-- photo -->
<rect x="323" y="737" width="27" height="22" fill="#a8d0c8"/><path d="M323 752C330 744 340 746 350 754V759H323Z" fill="#4a8a7a"/><path d="M323 743V737H329M344 737H350V743M323 753V759H329M344 759H350V753" fill="none" stroke="#3a78c0" stroke-width="2.500"/>
<!-- jewel -->
<ellipse cx="396" cy="756" rx="15" ry="9" fill="none" stroke="#c8a828" stroke-width="3.500"/><ellipse cx="396" cy="756" rx="9" ry="6" fill="#1c1c3a"/><path d="M389 734H402L406 741 396 750 385 741Z" fill="#20309a"/><text x="391" y="761" font-family="Liberation Sans,sans-serif" font-weight="700" font-size="11" fill="#e8e8f0">A</text>
<!-- tray -->
<path d="M1181 751L1184.500 747 1188 751Z" fill="#fff"/>
<path d="M1202.500 743V756" stroke="#fff" stroke-width="1.300"/><path d="M1204 743H1211V746L1215 746 1213 748.500 1215 751H1204Z" fill="#fff"/>
<path d="M1226 752H1227.500V755H1226ZM1229 750H1231V755H1229ZM1232 748H1234V755H1232ZM1235 746H1237V755H1235ZM1238 744H1240V755H1238Z" fill="#fff" opacity=".9"/>
<path d="M1250 747H1253L1257 743V757L1253 753H1250Z" fill="#e8e8e8"/><path d="M1259 747C1261 749 1261 751 1259 753M1262 745C1265 748 1265 752 1262 755" fill="none" stroke="#ddd"/>
</svg>

<!-- GW label -->
<div style="left:56px;top:456px;width:330px;height:38px;background:#fff"></div>
<div class="t" style="left:56px;top:459px;font:700 24.5px/30px 'Liberation Sans',sans-serif;color:#000">GW-1.3 GM</div>

<!-- dialog text -->
<div class="t" style="left:43px;top:516px;color:#1a1a1a;font-size:12px">Counting number of round jewels</div>
<span class="d" style="left:55px;top:565px">Jewel</span>
<span class="d" style="left:167px;top:565px">Diameter</span>
<span class="d" style="left:279px;top:565px">Number</span>
<span class="d" style="left:55px;top:595px">Diamond j</span>
<span class="d" style="left:178px;top:595px">1.40</span>
<span class="d" style="left:282px;top:595px">20</span>
<span class="d" style="left:55px;top:610px">Diamond j</span>
<span class="d" style="left:178px;top:610px">1.42</span>
<span class="d" style="left:282px;top:610px">12</span>
<span class="d" style="left:301px;top:668px;color:#111">OK</span>

<!-- clock -->
<div class="t" style="left:1290px;top:734px;color:#f0eeee;font-size:12px">4:26 PM</div>
<div class="t" style="left:1284px;top:750px;color:#f0eeee;font-size:12px">05-Oct-17</div>

<!-- caption overlay -->
<div style="left:463px;top:707px;width:440px;height:31px;background:rgba(0,0,0,.58)"></div>
<div class="t" style="left:506px;top:688px;color:#fff;font-size:23.1px;line-height:28px">Swirl Gold Ring With Diamonds 49</div>
</body>
</html>
